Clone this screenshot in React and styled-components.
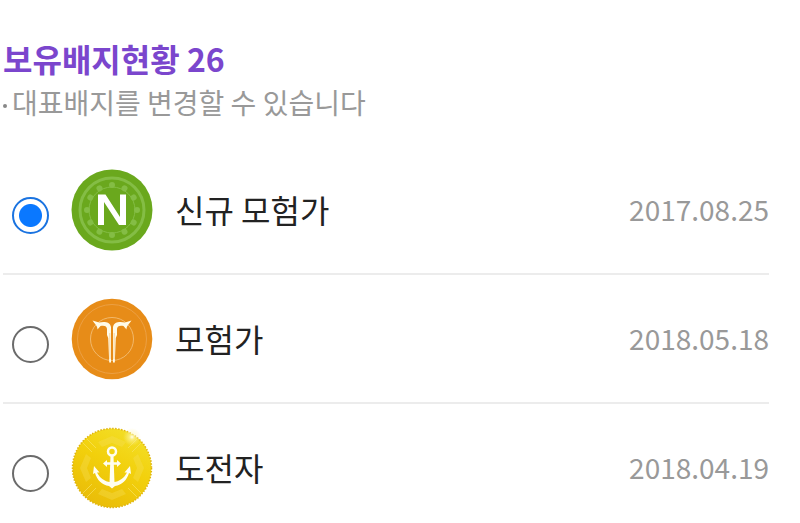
import React, { useState } from "react";
import styled, { createGlobalStyle } from "styled-components";

const GlobalStyle = createGlobalStyle`
  * { box-sizing: border-box; }
  body {
    margin: 0;
    background: #fff;
    font-family: "Noto Sans CJK KR", "Noto Sans", sans-serif;
    overflow-x: hidden;
  }
`;

const Page = styled.main`
  padding: 34px 31px 0 3px;
`;

const Title = styled.h1`
  margin: 0;
  font-size: 32px;
  line-height: 48px;
  font-weight: 700;
  color: #7b46cd;
`;

const Note = styled.p`
  display: flex;
  align-items: center;
  gap: 5px;
  margin: 0 0 24px;
  font-size: 28px;
  line-height: 40px;
  font-weight: 400;
  color: #999;

  &::before {
    content: "";
    width: 4px;
    height: 4px;
    margin-top: 8px;
    border-radius: 50%;
    background: #888;
  }
`;

const BadgeList = styled.ul`
  margin: 0;
  padding: 0;
  list-style: none;
`;

const BadgeRow = styled.li`
  border-bottom: 2px solid #ececec;

  &:last-child { border-bottom: 0; }
`;

const BadgeLabel = styled.label`
  display: flex;
  align-items: center;
  height: 127px;
  padding-left: 9px;
  cursor: pointer;
`;

const Radio = styled.input`
  appearance: none;
  flex: none;
  width: 37px;
  height: 37px;
  margin: 12px 22px 0 0;
  border: 2px solid #6b6b6b;
  border-radius: 50%;
  background: #fff;

  &:checked {
    border-color: #1a73e0;
    background: radial-gradient(circle, #0a78ff 11px, #fff 12px);
  }
`;

const Medal = styled.svg`
  flex: none;
  width: 82px;
  height: 82px;
  margin-right: 22px;
`;

const BadgeName = styled.span`
  flex: 1;
  padding-bottom: 2px;
  font-size: 32px;
  line-height: 48px;
  color: #222;
`;

const BadgeDate = styled.time`
  padding-bottom: 2px;
  font-size: 28px;
  line-height: 40px;
  color: #999;
`;

const ANGLES = [0, 30, 60, 90, 120, 150, 180, 210, 240, 270, 300, 330];

function NewcomerMedal() {
  return (
    <Medal viewBox="-41 -41 82 82" aria-hidden="true">
      <circle r="40.500" fill="#6aa81d" />
      <circle r="32" fill="none" stroke="#84bd45" strokeWidth="3" />
      <circle r="23" fill="none" stroke="#84bd45" strokeWidth="1" />
      {ANGLES.map((a) => (
        <circle key={a} cy="-25" r="3" fill="#84bd45" transform={`rotate(${a})`} />
      ))}
      <path d="M-14 15V-15.500H-6.500L8 7V-15.500H14V15H7L-8-8V15Z" fill="#fff" />
    </Medal>
  );
}

function ExplorerMedal() {
  return (
    <Medal viewBox="-41 -41 82 82" aria-hidden="true">
      <circle r="40.300" fill="#e78c18" />
      <circle r="34.500" fill="none" stroke="#eca044" strokeWidth="1" />
      <circle r="21.500" fill="none" stroke="#f2b96c" strokeWidth="1" />
      {[1, -1].map((side) => (
        <g key={side} transform={`scale(${side} 1)`}>
          <path
            d="M19.500-18.500L13-16.500C8-17.500 2-17.500 1-12V23.500H2.800L3.800-1L5-4V-10C5-13 8-14 11.500-13L14.500-9.500C14.500-13 17-15 19.500-18.500Z"
            fill="#fffbe8"
          />
          <path d="M2.200-6L2 20" stroke="#efb05a" strokeWidth="0.500" />
        </g>
      ))}
    </Medal>
  );
}

function ChallengerMedal() {
  return (
    <Medal viewBox="-41 -41 82 82" aria-hidden="true">
      <defs>
        <linearGradient id="gold" x1="0.75" y1="0" x2="0.25" y2="1">
          <stop offset="0" stopColor="#f3df28" />
          <stop offset="0.45" stopColor="#f2d00c" />
          <stop offset="1" stopColor="#e9bb08" />
        </linearGradient>
        <radialGradient id="shine">
          <stop offset="0" stopColor="#fff" stopOpacity="0.95" />
          <stop offset="0.3" stopColor="#fff9bd" stopOpacity="0.55" />
          <stop offset="1" stopColor="#fff29a" stopOpacity="0" />
        </radialGradient>
      </defs>
      <circle r="39.500" fill="url(#gold)" />
      <circle r="39.500" fill="none" stroke="#dfb40d" strokeWidth="1.500" strokeDasharray="1.500 1.500" />
      {[0, 90, 180, 270].map((a) => (
        <g key={a} transform={`rotate(${a})`}>
          <path d="M-14-26L0-32 14-26 10-21 0-25-10-21Z" fill="#f7e05a" opacity="0.35" />
          <path d="M-16-20L-25-29M-20-16L-29-25" stroke="#f9e66c" strokeWidth="1" opacity="0.6" />
        </g>
      ))}
      <circle cx="20" cy="-31" r="9" fill="url(#shine)" />
      <g fill="none" stroke="#fffef0">
        <circle cy="-16.500" r="4" strokeWidth="2.500" />
        <path d="M-6-4.500H6" strokeWidth="2.500" />
      </g>
      <g fill="#fffef0">
        <path d="M-1.500-12H1.500L2.500 15H-2.500Z" />
        <path d="M-9-4.500L-5-8V-1ZM9-4.500L5-8V-1Z" />
        <path d="M0 20.500L-3 18C-10 17-15 12-17 5L-19 6-18-2-12.500 4.500-15 4.500C-12 10.500-7 13.500-2 14H2C7 13.500 12 10.500 15 4.500L12.500 4.500 18-2 19 6 17 5C15 12 10 17 3 18Z" />
      </g>
    </Medal>
  );
}

const BADGES = [
  { id: "newcomer", name: "신규 모험가", date: "2017.08.25", Icon: NewcomerMedal },
  { id: "explorer", name: "모험가", date: "2018.05.18", Icon: ExplorerMedal },
  { id: "challenger", name: "도전자", date: "2018.04.19", Icon: ChallengerMedal },
];

export default function App() {
  const [selected, setSelected] = useState("newcomer");
  return (
    <>
      <GlobalStyle />
      <Page>
        <Title>보유배지현황 26</Title>
        <Note>대표배지를 변경할 수 있습니다</Note>
        <BadgeList>
          {BADGES.map(({ id, name, date, Icon }) => (
            <BadgeRow key={id}>
              <BadgeLabel htmlFor={id}>
                <Radio
                  type="radio"
                  id={id}
                  name="badge"
                  checked={selected === id}
                  onChange={() => setSelected(id)}
                />
                <Icon />
                <BadgeName>{name}</BadgeName>
                <BadgeDate dateTime={date.replaceAll(".", "-")}>{date}</BadgeDate>
              </BadgeLabel>
            </BadgeRow>
          ))}
        </BadgeList>
      </Page>
    </>
  );
}
